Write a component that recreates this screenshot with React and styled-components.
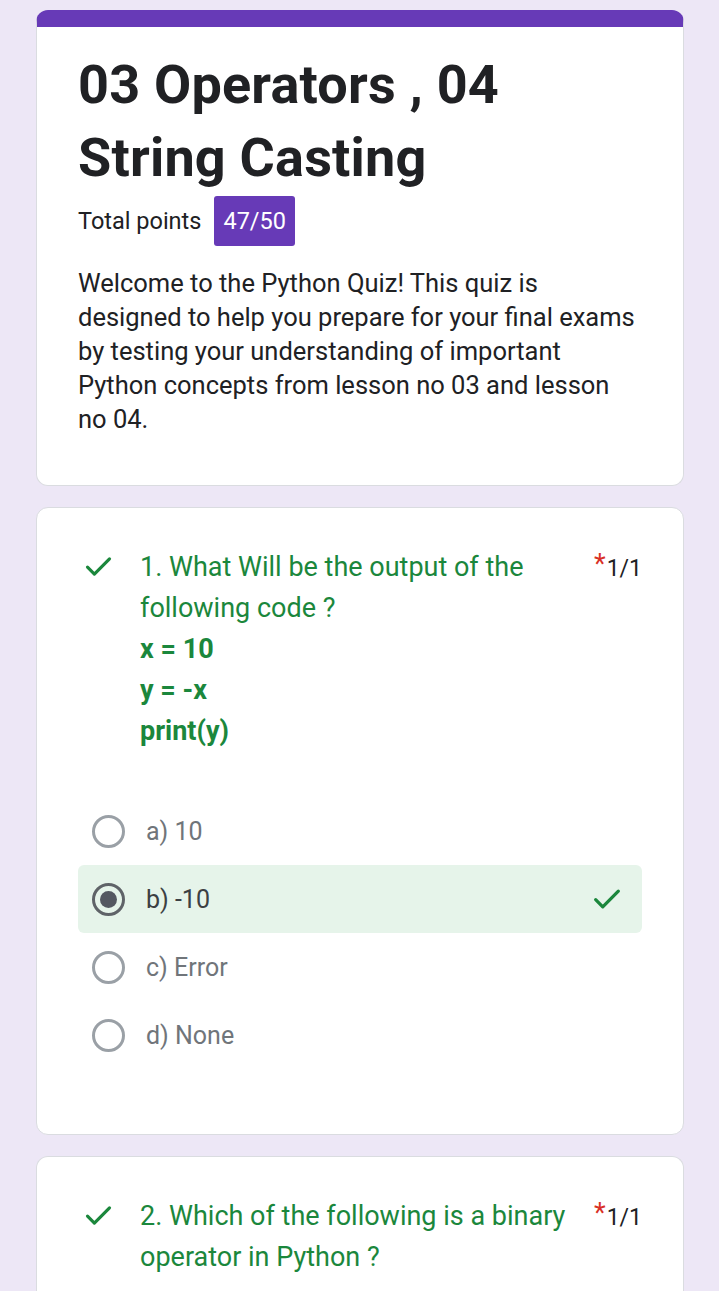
import React from 'react'
import styled, { createGlobalStyle } from 'styled-components'

const GlobalStyle = createGlobalStyle`
    html, body {
        margin: 0;
        padding: 0;
        background: #ede7f6;
        font-family: Roboto, "Noto Sans", Arial, sans-serif;
    }
    * { box-sizing: border-box; }
`;

const Check = ({ size = 30 }) => (
    <svg width={size} height={size} viewBox="0 0 24 24" fill="none">
        <path d="M4 12.5l5 5L20 6.5" stroke="#1b873c" strokeWidth="2.3" strokeLinecap="round" strokeLinejoin="round" />
    </svg>
)

const options = [
    { label: 'a) 10' },
    { label: 'b) -10', selected: true, correct: true },
    { label: 'c) Error' },
    { label: 'd) None' },
]

const App = () => {
    return (
        <Page>
            <GlobalStyle />
            <HeaderCard>
                <Title>03 Operators , 04<br />String Casting</Title>
                <PointsRow>
                    <span>Total points</span>
                    <Badge>47/50</Badge>
                </PointsRow>
                <Description>
                    Welcome to the Python Quiz! This quiz is designed to help you prepare for your final exams by testing your understanding of important Python concepts from lesson no 03 and lesson no 04.
                </Description>
            </HeaderCard>

            <Card>
                <QuestionHead>
                    <CheckSlot><Check size={33} /></CheckSlot>
                    <QuestionText>
                        1. What Will be the output of the following code ?
                        <Code>x = 10</Code>
                        <Code>y = -x</Code>
                        <Code>print(y)</Code>
                    </QuestionText>
                    <Score><Star>*</Star>1/1</Score>
                </QuestionHead>
                <Options>
                    {options.map((o) => (
                        <Option key={o.label} selected={o.selected}>
                            <Radio selected={o.selected} />
                            <OptionLabel selected={o.selected}>{o.label}</OptionLabel>
                            {o.correct && <OptionCheck><Check size={34} /></OptionCheck>}
                        </Option>
                    ))}
                </Options>
            </Card>

            <Card cut>
                <QuestionHead>
                    <CheckSlot><Check size={33} /></CheckSlot>
                    <QuestionText>2. Which of the following is a binary operator in Python ?</QuestionText>
                    <Score><Star>*</Star>1/1</Score>
                </QuestionHead>
            </Card>
        </Page>
    )
}

export default App

const Page = styled.div`
    width: 719px;
    height: 1291px;
    overflow: hidden;
    padding: 10px 35px 0 36px;
    display: flex;
    flex-direction: column;
    gap: 21px;
`;

const HeaderCard = styled.div`
    background: #fff;
    border: 1px solid #dadce0;
    border-top: 17px solid #673ab7;
    border-radius: 12px;
    padding: 21px 40px 49px 41px;
    color: #202124;
`;

const Title = styled.h1`
    margin: 0;
    font-size: 54px;
    font-weight: 700;
    line-height: 73px;
    letter-spacing: 0.2px;
`;

const PointsRow = styled.div`
    display: flex;
    align-items: center;
    gap: 13px;
    margin-top: 2px;
    font-size: 23.5px;
`;

const Badge = styled.span`
    background: #673ab7;
    color: #fff;
    border-radius: 3px;
    height: 50px;
    padding: 0 9px;
    display: flex;
    align-items: center;
`;

const Description = styled.p`
    margin: 20px 0 0;
    font-size: 25.5px;
    line-height: 34px;
`;

const Card = styled.div`
    background: #fff;
    border: 1px solid #dadce0;
    border-radius: 12px;
    padding: 35px 41px ${(p) => (p.cut ? '40px' : '65px')} 41px;
    ${(p) => p.cut && 'flex: 1; border-bottom: none; border-radius: 12px 12px 0 0;'}
`;

const QuestionHead = styled.div`
    display: flex;
    align-items: flex-start;
`;

const CheckSlot = styled.div`
    width: 62px;
    padding: 7px 0 0 4px;
    flex-shrink: 0;
`;

const QuestionText = styled.div`
    flex: 1;
    color: #1b873c;
    font-size: 27px;
    line-height: 41px;
    padding-top: 4px;
`;

const Code = styled.div`
    font-weight: 700;
`;

const Score = styled.div`
    flex-shrink: 0;
    width: 76px;
    text-align: right;
    padding-top: 5px;
    font-size: 23px;
    color: #202124;
`;

const Star = styled.span`
    color: #d93025;
    font-size: 27px;
    vertical-align: 3px;
    margin-right: 1px;
`;

const Options = styled.div`
    display: flex;
    flex-direction: column;
    margin-top: 45px;
`;

const Option = styled.div`
    display: flex;
    align-items: center;
    height: 68px;
    padding: 0 18px 0 14px;
    border-radius: 6px;
    background: ${(p) => (p.selected ? '#e6f4ea' : 'transparent')};
`;

const Radio = styled.span`
    width: 33px;
    height: 33px;
    border-radius: 50%;
    flex-shrink: 0;
    border: 3px solid ${(p) => (p.selected ? '#5f6368' : '#9aa0a6')};
    position: relative;
    ${(p) => p.selected && `
        &::after {
            content: "";
            position: absolute;
            left: 50%;
            top: 50%;
            width: 17px;
            height: 17px;
            margin: -8.5px 0 0 -8.5px;
            border-radius: 50%;
            background: #545861;
        }
    `}
`;

const OptionLabel = styled.span`
    margin-left: 21px;
    font-size: 25px;
    color: ${(p) => (p.selected ? '#3c4043' : '#70757a')};
    flex: 1;
`;

const OptionCheck = styled.span`
    display: flex;
`;
